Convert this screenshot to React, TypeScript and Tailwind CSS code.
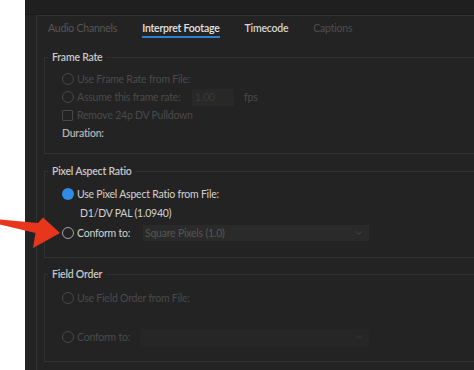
import React from "react";
import { ChevronDown } from "lucide-react";

function Radio({ state }: { state: "off" | "on" | "dim" }) {
  if (state === "on")
    return <span className="w-[12px] h-[12px] rounded-full bg-[#2f8be6] shrink-0" />;
  return (
    <span
      className={
        "w-[12px] h-[12px] rounded-full border-[1.5px] shrink-0 " +
        (state === "off" ? "border-[#a4a4a4]" : "border-[#474747]")
      }
    />
  );
}

function Legend({ children }: { children: React.ReactNode }) {
  return (
    <legend className="ml-[3px] px-[4px] h-[14px] leading-[14px] text-[10.5px] font-semibold text-[#c8c8c8]">
      {children}
    </legend>
  );
}

export default function App() {
  return (
    <div className="relative w-[474px] h-[370px] overflow-hidden flex bg-white font-['Lato',sans-serif] text-[10.5px] leading-[14px] tracking-[-0.22px]">
      <div className="w-[25px] shrink-0 bg-white" />
      <div className="flex-1 flex flex-col bg-[#232323] min-w-0">
        <div className="h-[15px] shrink-0 bg-[#1f1f1f] border-b border-[#1a1a1a]" />
        <div className="flex-1 pl-[11px]">
          <div className="w-[480px] h-full border-l border-t border-[#323232] pl-[7px]">
            {/* tabs */}
            <div className="flex gap-[25px] pl-[4px] pt-[5px]">
              <div className="flex flex-col">
                <span className="text-[#565656]">Audio Channels</span>
              </div>
              <div className="flex flex-col">
                <span className="text-[#e4e4e4] font-semibold">Interpret Footage</span>
                <span className="mt-[1px] h-[2px] bg-[#2d7fd2]" />
              </div>
              <div className="flex flex-col">
                <span className="text-[#d6d6d6] font-semibold">Timecode</span>
              </div>
              <div className="flex flex-col">
                <span className="text-[#4e4e4e]">Captions</span>
              </div>
            </div>

            {/* Frame Rate */}
            <fieldset className="mt-[12px] w-[470px] border border-[#303030] pt-[6px] pb-[11px] text-[#4a4a4a]">
              <Legend>Frame Rate</Legend>
              <div className="pl-[17px]">
                <div className="h-[18px] flex items-center gap-[3px]">
                  <Radio state="dim" />
                  <span>Use Frame Rate from File:</span>
                </div>
                <div className="h-[18px] flex items-center">
                  <Radio state="dim" />
                  <span className="ml-[3px] w-[115px]">Assume this frame rate:</span>
                  <span className="w-[42px] h-[17px] bg-[#282828] flex items-center px-[3px] text-[#3a3a3a]">1.00</span>
                  <span className="ml-[10px]">fps</span>
                </div>
                <div className="h-[18px] flex items-center gap-[4px]">
                  <span className="w-[11px] h-[11px] border-[1.5px] border-[#474747] rounded-[1px] shrink-0" />
                  <span>Remove 24p DV Pulldown</span>
                </div>
                <div className="h-[18px] flex items-center">
                  <span className="text-[#b4b4b4] font-semibold">Duration:</span>
                </div>
              </div>
            </fieldset>

            {/* Pixel Aspect Ratio */}
            <fieldset className="mt-[10px] w-[470px] border border-[#303030] pt-[7px] pb-[14px] text-[#d2d2d2]">
              <Legend>Pixel Aspect Ratio</Legend>
              <div className="pl-[17px]">
                <div className="h-[18px] flex items-center gap-[3px]">
                  <Radio state="on" />
                  <span>Use Pixel Aspect Ratio from File:</span>
                </div>
                <div className="h-[20px] flex items-center pl-[18px]">
                  <span>D1/DV PAL (1.0940)</span>
                </div>
                <div className="h-[20px] flex items-center">
                  <Radio state="off" />
                  <span className="ml-[3px] w-[66px]">Conform to:</span>
                  <span className="w-[226px] h-[16px] bg-[#2a2a2a] flex items-center justify-between pl-[2px] pr-[5px] text-[#565656]">
                    <span>Square Pixels (1.0)</span>
                    <ChevronDown size={10} strokeWidth={2} className="text-[#4a4a4a]" />
                  </span>
                </div>
              </div>
            </fieldset>

            {/* Field Order */}
            <fieldset className="mt-[9px] w-[470px] border border-[#303030] pt-[8px] pb-[14px] text-[#4a4a4a]">
              <Legend>Field Order</Legend>
              <div className="pl-[17px]">
                <div className="h-[18px] flex items-center gap-[3px]">
                  <Radio state="dim" />
                  <span>Use Field Order from File:</span>
                </div>
                <div className="mt-[20px] h-[20px] flex items-center">
                  <Radio state="dim" />
                  <span className="ml-[3px] w-[63px]">Conform to:</span>
                  <span className="w-[229px] h-[17px] bg-[#262626] flex items-center justify-end pr-[5px]">
                    <ChevronDown size={10} strokeWidth={2} className="text-[#3a3a3a]" />
                  </span>
                </div>
              </div>
            </fieldset>
          </div>
        </div>
      </div>

      {/* red arrow annotation */}
      <svg
        className="absolute left-0 top-[210px]"
        width="64"
        height="42"
        viewBox="0 210 64 42"
      >
        <polygon
          points="0,219.5 38,223 43,217.5 60,233 33,248 35.5,233 0,224.5"
          fill="#e8361d"
        />
      </svg>
    </div>
  );
}
